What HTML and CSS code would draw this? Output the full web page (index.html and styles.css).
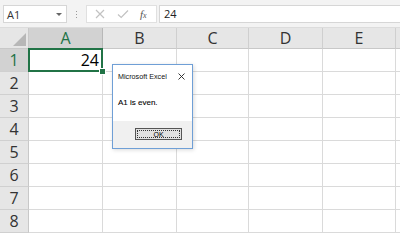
FILE: index.html
```html
<!DOCTYPE html>
<html>
<head>
<meta charset="utf-8">
<link rel="stylesheet" href="styles.css">
</head>
<body>
<div class="app">
  <div class="topbar">
    <div class="namebox"><span class="nb-text">A1</span><span class="nb-arrow"></span></div>
    <div class="dots"><i></i><i></i><i></i></div>
    <div class="fxbox">
      <svg class="ic" width="10" height="10" viewBox="0 0 10 10"><path d="M1 1L9 9M9 1L1 9" stroke="#c2c2c2" stroke-width="1.2" fill="none"/></svg>
      <svg class="ic" width="12" height="10" viewBox="0 0 12 10"><path d="M1 5.5L4.2 8.5L11 1.5" stroke="#c2c2c2" stroke-width="1.2" fill="none"/></svg>
      <span class="fx"><i>f</i><span class="fx-x">x</span></span>
    </div>
    <div class="formula">24</div>
  </div>
  <div class="sheet">
    <div class="corner"><span class="tri"></span></div>
    <div class="ch sel">A</div>
    <div class="ch">B</div>
    <div class="ch">C</div>
    <div class="ch">D</div>
    <div class="ch">E</div>
    <div class="ch last"></div>

    <div class="rh sel">1</div>
    <div class="c a1">24<span class="handle"></span></div>
    <div class="c"></div><div class="c"></div><div class="c"></div><div class="c"></div><div class="c last"></div>

    <div class="rh">2</div>
    <div class="c"></div><div class="c"></div><div class="c"></div><div class="c"></div><div class="c"></div><div class="c last"></div>
    <div class="rh">3</div>
    <div class="c"></div><div class="c"></div><div class="c"></div><div class="c"></div><div class="c"></div><div class="c last"></div>
    <div class="rh">4</div>
    <div class="c"></div><div class="c"></div><div class="c"></div><div class="c"></div><div class="c"></div><div class="c last"></div>
    <div class="rh">5</div>
    <div class="c"></div><div class="c"></div><div class="c"></div><div class="c"></div><div class="c"></div><div class="c last"></div>
    <div class="rh">6</div>
    <div class="c"></div><div class="c"></div><div class="c"></div><div class="c"></div><div class="c"></div><div class="c last"></div>
    <div class="rh">7</div>
    <div class="c"></div><div class="c"></div><div class="c"></div><div class="c"></div><div class="c"></div><div class="c last"></div>
    <div class="rh">8</div>
    <div class="c"></div><div class="c"></div><div class="c"></div><div class="c"></div><div class="c"></div><div class="c last"></div>
  </div>

  <div class="dialog">
    <div class="dlg-title"><span class="dlg-name">Microsoft Excel</span>
      <svg width="7" height="7" viewBox="0 0 7 7"><path d="M0.5 0.5L6.5 6.5M6.5 0.5L0.5 6.5" stroke="#222" stroke-width="0.9" fill="none"/></svg>
    </div>
    <div class="dlg-body">A1 is even.</div>
    <div class="dlg-foot"><div class="btn"><span class="btn-in">OK</span></div></div>
  </div>
</div>
</body>
</html>
```

FILE: styles.css
```css
html, body { margin: 0; padding: 0; }
body { width: 400px; height: 238px; overflow: hidden; background: #fff; font-family: "Open Sans", "Noto Sans", sans-serif; }
.app { position: relative; width: 400px; height: 238px; overflow: hidden; }

.topbar { height: 28px; box-sizing: border-box; background: #f3f3f3; display: flex; align-items: flex-start; padding: 5px 0 0 3px; border-bottom: 1px solid #dcdcdc; }
.namebox { width: 64px; height: 18px; box-sizing: border-box; background: #fff; border: 1px solid #d6d6d6; display: flex; align-items: center; justify-content: space-between; padding: 0 4px 0 3px; }
.nb-text { font-size: 11px; color: #333; }
.nb-arrow { width: 0; height: 0; border-left: 3px solid transparent; border-right: 3px solid transparent; border-top: 3px solid #666; }
.dots { width: 19px; height: 18px; display: flex; flex-direction: column; align-items: center; justify-content: center; gap: 2px; }
.dots i { display: block; width: 1px; height: 1px; background: #999; }
.fxbox { width: 71px; height: 18px; box-sizing: border-box; background: #fff; border: 1px solid #e0e0e0; display: flex; align-items: center; padding-left: 8px; }
.fxbox .ic:nth-child(1) { margin-right: 12px; }
.fxbox .ic:nth-child(2) { margin-right: 11px; }
.fx { font-family: "Liberation Serif", serif; font-size: 11px; color: #555; }
.fx i { font-style: italic; }
.fx-x { font-size: 8px; font-style: italic; }
.formula { flex: 1; height: 18px; box-sizing: border-box; margin-left: 2px; background: #fff; border: 1px solid #d6d6d6; border-right: none; font-size: 11px; color: #222; padding-left: 4px; line-height: 16px; }

.sheet { display: grid; grid-template-columns: 29px 74px 74px 72px 74px 73px 1fr; grid-template-rows: 21px repeat(8, 23px); }
.corner { background: #e6e6e6; border-right: 1px solid #c8c8c8; border-bottom: 1px solid #c8c8c8; position: relative; }
.tri { position: absolute; right: 2px; bottom: 2px; width: 0; height: 0; border-left: 13px solid transparent; border-bottom: 13px solid #b7b7b7; }
.ch { background: #e6e6e6; border-right: 1px solid #cfcfcf; border-bottom: 1px solid #c8c8c8; font-size: 16px; color: #333; display: flex; align-items: center; justify-content: center; }
.ch.sel { background: #d2d2d2; color: #217346; border-right-color: #b8b8b8; }
.rh { background: #e6e6e6; border-right: 1px solid #c8c8c8; border-bottom: 1px solid #d0d0d0; font-size: 16px; color: #333; display: flex; align-items: center; justify-content: center; }
.rh.sel { background: #d2d2d2; color: #217346; }
.c { border-right: 1px solid #dadada; border-bottom: 1px solid #dadada; }
.last { border-right: none; }
.a1 { position: relative; font-size: 16px; color: #000; display: flex; align-items: center; justify-content: flex-end; padding-right: 3px; }
.a1::after { content: ""; position: absolute; left: -1px; top: -1px; right: -1px; bottom: -1px; border: 2px solid #217346; }
.handle { position: absolute; right: -4px; bottom: -4px; width: 5px; height: 5px; background: #217346; border: 1px solid #fff; z-index: 2; }

.dialog { position: absolute; left: 112px; top: 64px; width: 81px; height: 85px; box-sizing: border-box; border: 1px solid #6f9fd6; background: #fff; box-shadow: 1px 1px 4px rgba(0,0,0,0.15); font-family: "Liberation Sans", "Noto Sans", sans-serif; }
.dlg-title { height: 20px; display: flex; align-items: center; justify-content: space-between; padding: 2px 7px 0 5px; box-sizing: border-box; font-size: 7.2px; color: #111; white-space: nowrap; }
.dlg-body { height: 36px; box-sizing: border-box; font-size: 8px; color: #000; padding: 13px 0 0 5px; white-space: nowrap; -webkit-text-stroke: 0.1px #000; }
.dlg-foot { height: 27px; box-sizing: border-box; background: #f0f0f0; display: flex; justify-content: flex-end; align-items: flex-start; padding: 7px 10px 0 0; }
.btn { width: 47px; height: 12px; box-sizing: border-box; border: 1px solid #555; background: #e1e1e1; padding: 1px; }
.btn-in { display: flex; height: 100%; box-sizing: border-box; border: 1px dotted #333; align-items: center; justify-content: center; font-size: 7px; color: #000; }
```
